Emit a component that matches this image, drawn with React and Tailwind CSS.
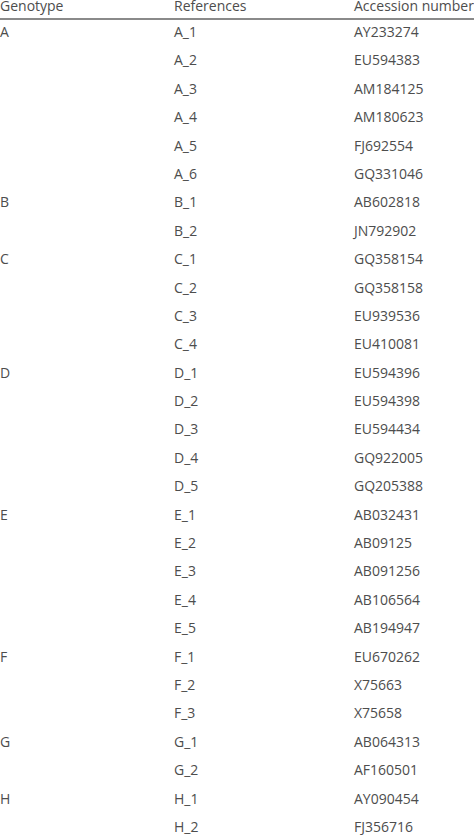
import React from "react";

const groups = [
  ["A", [["A_1", "AY233274"], ["A_2", "EU594383"], ["A_3", "AM184125"], ["A_4", "AM180623"], ["A_5", "FJ692554"], ["A_6", "GQ331046"]]],
  ["B", [["B_1", "AB602818"], ["B_2", "JN792902"]]],
  ["C", [["C_1", "GQ358154"], ["C_2", "GQ358158"], ["C_3", "EU939536"], ["C_4", "EU410081"]]],
  ["D", [["D_1", "EU594396"], ["D_2", "EU594398"], ["D_3", "EU594434"], ["D_4", "GQ922005"], ["D_5", "GQ205388"]]],
  ["E", [["E_1", "AB032431"], ["E_2", "AB09125"], ["E_3", "AB091256"], ["E_4", "AB106564"], ["E_5", "AB194947"]]],
  ["F", [["F_1", "EU670262"], ["F_2", "X75663"], ["F_3", "X75658"]]],
  ["G", [["G_1", "AB064313"], ["G_2", "AF160501"]]],
  ["H", [["H_1", "AY090454"], ["H_2", "FJ356716"]]],
];

export default function App() {
  const rows = [];
  groups.forEach(([g, refs]) => {
    refs.forEach(([r, acc], i) => rows.push([i === 0 ? g : "", r, acc]));
  });
  return (
    <div
      className="w-[474px] h-[835px] bg-white text-[#4d4d4d] text-[14px] overflow-hidden"
      style={{ fontFamily: '"Open Sans", sans-serif' }}
    >
      <div className="flex h-[20px] border-b-2 border-[#8a8a8a] leading-[12px]">
        <div className="w-[174px]">Genotype</div>
        <div className="w-[180px]">References</div>
        <div className="flex-1 whitespace-nowrap">Accession number</div>
      </div>
      {rows.map(([g, r, a], i) => (
        <div key={i} className="flex h-[28.4px] leading-[24px]">
          <div className="w-[174px]">{g}</div>
          <div className="w-[180px]">{r}</div>
          <div className="flex-1">{a}</div>
        </div>
      ))}
    </div>
  );
}
